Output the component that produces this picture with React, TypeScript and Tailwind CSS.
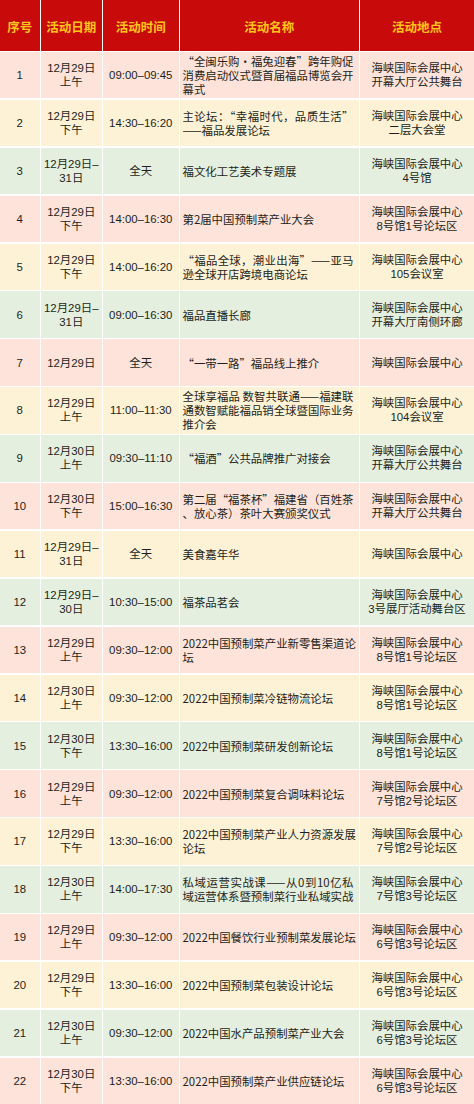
import React from 'react';

interface EventRow {
  no: number;
  date: string[];
  time: string;
  name: string[];
  place: string[];
}

const HALL = '海峡国际会展中心';

const rows: EventRow[] = [
  { no: 1, date: ['12月29日', '上午'], time: '09:00–09:45', name: ['“全闽乐购・福兔迎春”跨年购促', '消费启动仪式暨首届福品博览会开', '幕式'], place: [HALL, '开幕大厅公共舞台'] },
  { no: 2, date: ['12月29日', '下午'], time: '14:30–16:20', name: ['主论坛：“幸福时代，品质生活”', '——福品发展论坛'], place: [HALL, '二层大会堂'] },
  { no: 3, date: ['12月29日–', '31日'], time: '全天', name: ['福文化工艺美术专题展'], place: [HALL, '4号馆'] },
  { no: 4, date: ['12月29日', '下午'], time: '14:00–16:30', name: ['第2届中国预制菜产业大会'], place: [HALL, '8号馆1号论坛区'] },
  { no: 5, date: ['12月29日', '下午'], time: '14:00–16:20', name: ['“福品全球，潮业出海”——亚马', '逊全球开店跨境电商论坛'], place: [HALL, '105会议室'] },
  { no: 6, date: ['12月29日–', '31日'], time: '09:00–16:30', name: ['福品直播长廊'], place: [HALL, '开幕大厅南侧环廊'] },
  { no: 7, date: ['12月29日'], time: '全天', name: ['“一带一路”福品线上推介'], place: [HALL] },
  { no: 8, date: ['12月29日', '上午'], time: '11:00–11:30', name: ['全球享福品 数智共联通——福建联', '通数智赋能福品销全球暨国际业务', '推介会'], place: [HALL, '104会议室'] },
  { no: 9, date: ['12月30日', '上午'], time: '09:30–11:10', name: ['“福酒”公共品牌推广对接会'], place: [HALL, '开幕大厅公共舞台'] },
  { no: 10, date: ['12月30日', '下午'], time: '15:00–16:30', name: ['第二届“福茶杯”福建省（百姓茶', '、放心茶）茶叶大赛颁奖仪式'], place: [HALL, '开幕大厅公共舞台'] },
  { no: 11, date: ['12月29日–', '31日'], time: '全天', name: ['美食嘉年华'], place: [HALL] },
  { no: 12, date: ['12月29日–', '30日'], time: '10:30–15:00', name: ['福茶品茗会'], place: [HALL, '3号展厅活动舞台区'] },
  { no: 13, date: ['12月29日', '上午'], time: '09:30–12:00', name: ['2022中国预制菜产业新零售渠道论', '坛'], place: [HALL, '8号馆1号论坛区'] },
  { no: 14, date: ['12月30日', '上午'], time: '09:30–12:00', name: ['2022中国预制菜冷链物流论坛'], place: [HALL, '8号馆1号论坛区'] },
  { no: 15, date: ['12月30日', '下午'], time: '13:30–16:00', name: ['2022中国预制菜研发创新论坛'], place: [HALL, '8号馆1号论坛区'] },
  { no: 16, date: ['12月29日', '上午'], time: '09:30–12:00', name: ['2022中国预制菜复合调味料论坛'], place: [HALL, '7号馆2号论坛区'] },
  { no: 17, date: ['12月29日', '下午'], time: '13:30–16:00', name: ['2022中国预制菜产业人力资源发展', '论坛'], place: [HALL, '7号馆2号论坛区'] },
  { no: 18, date: ['12月30日', '上午'], time: '14:00–17:30', name: ['私域运营实战课——从0到10亿私', '域运营体系暨预制菜行业私域实战'], place: [HALL, '7号馆3号论坛区'] },
  { no: 19, date: ['12月29日', '上午'], time: '09:30–12:00', name: ['2022中国餐饮行业预制菜发展论坛'], place: [HALL, '6号馆3号论坛区'] },
  { no: 20, date: ['12月29日', '下午'], time: '13:30–16:00', name: ['2022中国预制菜包装设计论坛'], place: [HALL, '6号馆3号论坛区'] },
  { no: 21, date: ['12月30日', '上午'], time: '09:30–12:00', name: ['2022中国水产品预制菜产业大会'], place: [HALL, '6号馆3号论坛区'] },
  { no: 22, date: ['12月30日', '下午'], time: '13:30–16:00', name: ['2022中国预制菜产业供应链论坛'], place: [HALL, '6号馆3号论坛区'] },
];

// pink / yellow / green, repeating
const rowColors = ['bg-[#fde3d9]', 'bg-[#fef2d6]', 'bg-[#e5efdf]'];

const headers = ['序号', '活动日期', '活动时间', '活动名称', '活动地点'];

const Schedule: React.FC = () => {
  return (
    <div className="w-[474px] bg-white">
      <div className="grid grid-cols-[39.5px_60.5px_75.5px_178.5px_1fr] gap-[1.5px] font-['Liberation_Sans','Noto_Sans_CJK_SC',sans-serif] text-[11.4px] leading-[14px] text-[#231f20]">
        {/* Header */}
        {headers.map((h) => (
          <div
            key={h}
            className="flex h-[50.5px] items-center justify-center bg-[#c80a0a] pt-[3px] font-['Noto_Sans_CJK_SC',sans-serif] text-[12.5px] font-bold text-[#ffc51a]"
          >
            {h}
          </div>
        ))}

        {/* Rows */}
        {rows.map((row, i) => {
          const bg = rowColors[i % 3];
          return (
            <React.Fragment key={row.no}>
              <div className={`flex h-[46.4px] items-center justify-center ${bg}`}>{row.no}</div>
              <div className={`flex h-[46.4px] flex-col items-center justify-center whitespace-nowrap ${bg}`}>
                {row.date.map((d) => (
                  <div key={d}>{d}</div>
                ))}
              </div>
              <div className={`flex h-[46.4px] items-center justify-center whitespace-nowrap ${bg}`}>{row.time}</div>
              <div className={`flex h-[46.4px] flex-col justify-center pl-[2.5px] pr-[5px] font-['Noto_Sans_CJK_SC',sans-serif] whitespace-nowrap ${bg}`}>
                {row.name.map((line, j) => (
                  <div
                    key={j}
                    className={j < row.name.length - 1 ? 'text-justify [text-align-last:justify]' : ''}
                  >
                    {line}
                  </div>
                ))}
              </div>
              <div className={`flex h-[46.4px] flex-col items-center justify-center whitespace-nowrap ${bg}`}>
                {row.place.map((p) => (
                  <div key={p}>{p}</div>
                ))}
              </div>
            </React.Fragment>
          );
        })}
      </div>
    </div>
  );
};

export default function App() {
  return <Schedule />;
}
